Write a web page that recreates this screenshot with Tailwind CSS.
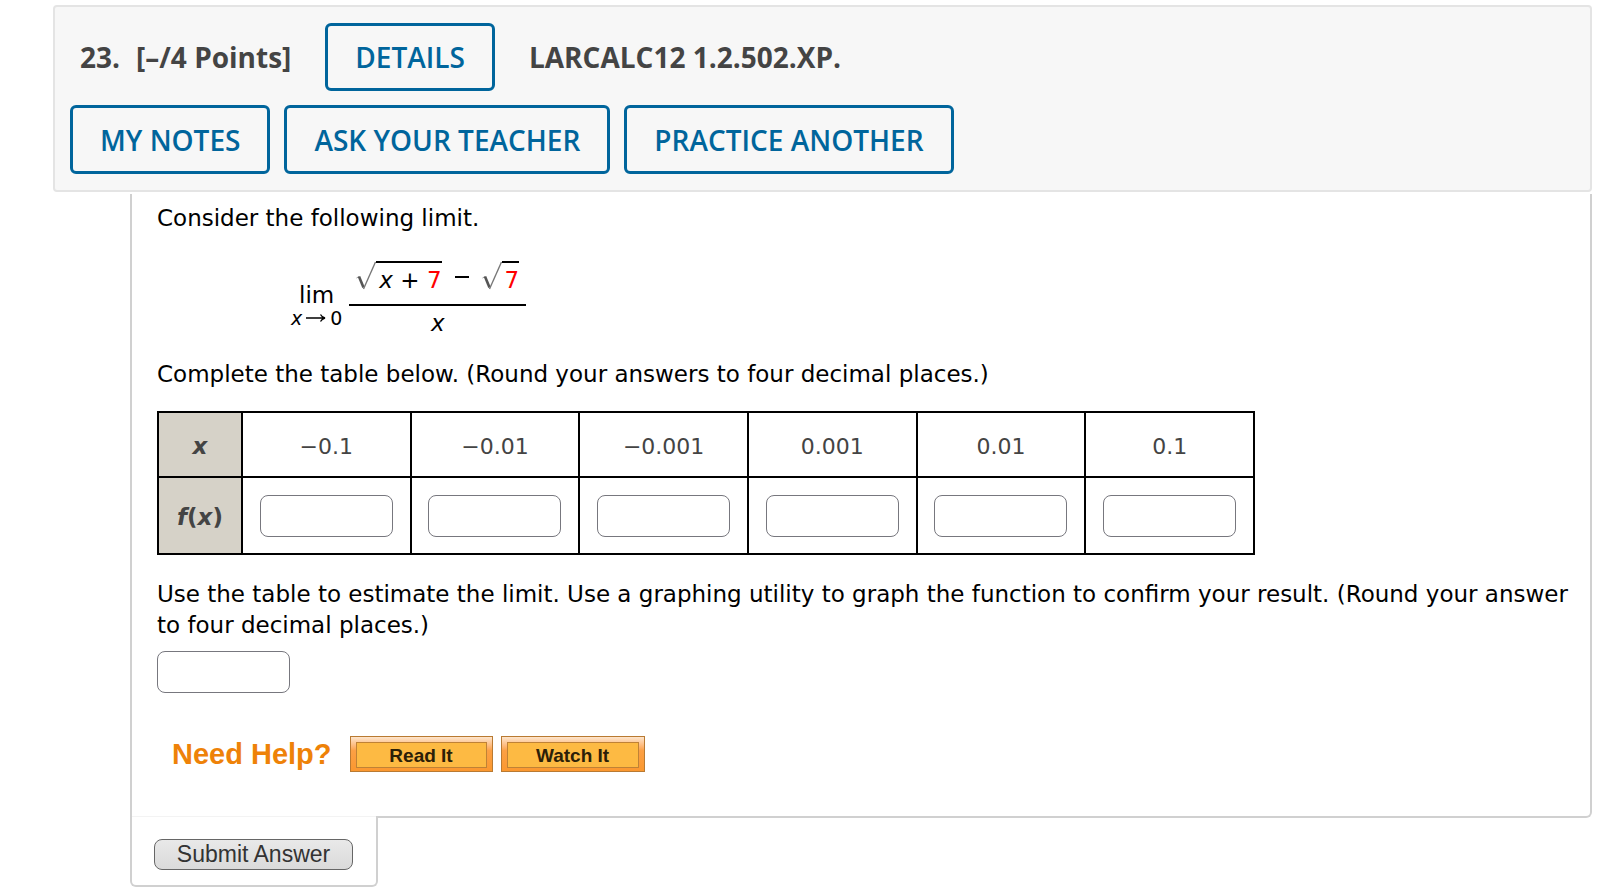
<!DOCTYPE html>
<html lang="en">
<head>
<meta charset="utf-8">
<title>Question 23</title>
<script src="https://cdn.jsdelivr.net/npm/@tailwindcss/browser@4"></script>
</head>
<body class="bg-white text-black">
<main class="pl-[53px] pr-7 pt-[5px] font-['Verdana','DejaVu_Sans',sans-serif] text-[23px] leading-[31px]">
  <header class="rounded-sm border-2 border-[#e4e4e4] bg-[#f7f7f7] px-[15px] py-4 font-['Open_Sans',sans-serif] text-[28px] leading-[40px]">
    <div class="flex flex-wrap items-center">
      <h2 class="flex gap-4 pl-[10px] font-bold text-[#444]"><span>23.</span><span>[–/4 Points]</span></h2>
      <button class="ml-[34px] h-[68px] rounded-md border-3 border-[#00659c] px-[27px] font-semibold text-[#00659c]">DETAILS</button>
      <span class="ml-[34px] font-bold text-[#444]">LARCALC12 1.2.502.XP.</span>
    </div>
    <div class="mt-[14px] flex flex-wrap gap-[14px]">
      <button class="h-[69px] rounded-md border-3 border-[#00659c] px-[27px] font-semibold text-[#00659c]">MY NOTES</button>
      <button class="h-[69px] rounded-md border-3 border-[#00659c] px-[27px] font-semibold text-[#00659c]">ASK YOUR TEACHER</button>
      <button class="h-[69px] rounded-md border-3 border-[#00659c] px-[27px] font-semibold text-[#00659c]">PRACTICE ANOTHER</button>
    </div>
  </header>

  <form class="ml-[77px] mt-[2px]">
    <section class="rounded-br-md border-2 border-t-0 border-[#d0d0d0] pb-[44px] pl-[25px] pr-5 pt-[9px]">
      <p>Consider the following limit.</p>

      <div class="ml-[134px] mt-[27px] flex items-start">
        <div class="flex flex-col items-center pt-[21px]">
          <span class="leading-[26px]">lim</span>
          <span class="flex items-center text-[19px] leading-[20px]"><i>x</i>
            <svg class="mx-1 h-3 w-5" viewBox="0 0 20 12" fill="none" stroke="#000" stroke-width="1.3"><path d="M0 6H18M14.500 2.500C15.500 4.500 17 5.500 19 6C17 6.500 15.500 7.500 14.500 9.500"/></svg>0</span>
        </div>
        <div class="ml-[7px] flex flex-col items-center">
          <div class="flex h-[45px] items-start border-b-2 border-black px-[7px]">
            <svg class="h-[29px] w-5" viewBox="0 0 20 29" fill="none"><path d="M0.500 17L3 15.500" stroke="#999" stroke-width="1"/><path d="M3 15.500L7.500 26.500" stroke="#555" stroke-width="2.600"/><path d="M7.500 28L19.500 1" stroke="#777" stroke-width="1.400"/></svg>
            <span class="border-t-2 border-black pl-[3px] leading-[34px]"><i>x</i> + <span class="text-[#f00]">7</span></span>
            <span class="mx-[13px] flex h-[32px] items-center"><svg class="h-[2px] w-[14px]" viewBox="0 0 14 2" aria-label="minus"><path d="M0 0H14V2H0z"/></svg></span>
            <svg class="h-[29px] w-5" viewBox="0 0 20 29" fill="none"><path d="M0.500 17L3 15.500" stroke="#999" stroke-width="1"/><path d="M3 15.500L7.500 26.500" stroke="#555" stroke-width="2.600"/><path d="M7.500 28L19.500 1" stroke="#777" stroke-width="1.400"/></svg>
            <span class="border-t-2 border-black pl-[3px] leading-[34px] text-[#f00]">7</span>
          </div>
          <i class="leading-[34px]">x</i>
        </div>
      </div>

      <p class="mt-[19px]">Complete the table below. (Round your answers to four decimal places.)</p>

      <table class="mt-[21px] w-[1098px] table-fixed border-collapse text-center text-[#444]">
        <tr class="h-[65px] text-[22px]">
          <th scope="row" class="w-[84px] border-2 border-black bg-[#d6d2c8] pt-[3px] text-[23px] italic">x</th>
          <td class="border-2 border-black pt-[3px]">−0.1</td>
          <td class="border-2 border-black pt-[3px]">−0.01</td>
          <td class="border-2 border-black pt-[3px]">−0.001</td>
          <td class="border-2 border-black pt-[3px]">0.001</td>
          <td class="border-2 border-black pt-[3px]">0.01</td>
          <td class="border-2 border-black pt-[3px]">0.1</td>
        </tr>
        <tr class="h-[77px]">
          <th scope="row" class="border-2 border-black bg-[#d6d2c8] pt-[3px]"><i>f</i>(<i>x</i>)</th>
          <td class="border-2 border-black"><input aria-label="f(−0.1)" class="block mx-auto h-[42px] w-[133px] rounded-lg border border-[#77777e] bg-white px-2"></td>
          <td class="border-2 border-black"><input aria-label="f(−0.01)" class="block mx-auto h-[42px] w-[133px] rounded-lg border border-[#77777e] bg-white px-2"></td>
          <td class="border-2 border-black"><input aria-label="f(−0.001)" class="block mx-auto h-[42px] w-[133px] rounded-lg border border-[#77777e] bg-white px-2"></td>
          <td class="border-2 border-black"><input aria-label="f(0.001)" class="block mx-auto h-[42px] w-[133px] rounded-lg border border-[#77777e] bg-white px-2"></td>
          <td class="border-2 border-black"><input aria-label="f(0.01)" class="block mx-auto h-[42px] w-[133px] rounded-lg border border-[#77777e] bg-white px-2"></td>
          <td class="border-2 border-black"><input aria-label="f(0.1)" class="block mx-auto h-[42px] w-[133px] rounded-lg border border-[#77777e] bg-white px-2"></td>
        </tr>
      </table>

      <label for="limit" class="mt-6 block">Use the table to estimate the limit. Use a graphing utility to graph the function to confirm your result. (Round your answer to four decimal places.)</label>
      <input id="limit" class="mt-[10px] block h-[42px] w-[133px] rounded-lg border border-[#77777e] bg-white px-2">

      <div class="mt-[43px] flex items-center pl-[15px] font-['Liberation_Sans',Arial,sans-serif] font-bold">
        <span class="text-[29px] text-[#ee8208]">Need Help?</span>
        <button type="button" class="ml-[18px] h-9 w-[143px] border border-[#b97a32] bg-linear-to-b from-[#fde5cc] via-[#fca044] via-40% to-[#fb982f] p-[5px] text-[19px] text-[#2b2008]"><span class="block border border-[#c08235] bg-[#fdba43] pb-[1px] pt-[3px] leading-[20px]">Read It</span></button>
        <button type="button" class="ml-2 h-9 w-[144px] border border-[#b97a32] bg-linear-to-b from-[#fde5cc] via-[#fca044] via-40% to-[#fb982f] p-[5px] text-[19px] text-[#2b2008]"><span class="block border border-[#c08235] bg-[#fdba43] pb-[1px] pt-[3px] leading-[20px]">Watch It</span></button>
      </div>
    </section>

    <div class="relative -mt-[2px] w-[248px] rounded-b-md border-2 border-t-0 border-[#d0d0d0] bg-white pb-[15px] pl-[22px]">
      <div class="-ml-[22px] mb-[22px] h-px bg-[#f3f3f3]"></div>
      <button class="block h-[31px] w-[199px] rounded-lg border border-[#666] bg-linear-to-b from-[#e9e9e9] to-[#dadada] font-['Liberation_Sans',Arial,sans-serif] leading-[29px] text-[#333]">Submit Answer</button>
    </div>
  </form>
</main>
</body>
</html>
